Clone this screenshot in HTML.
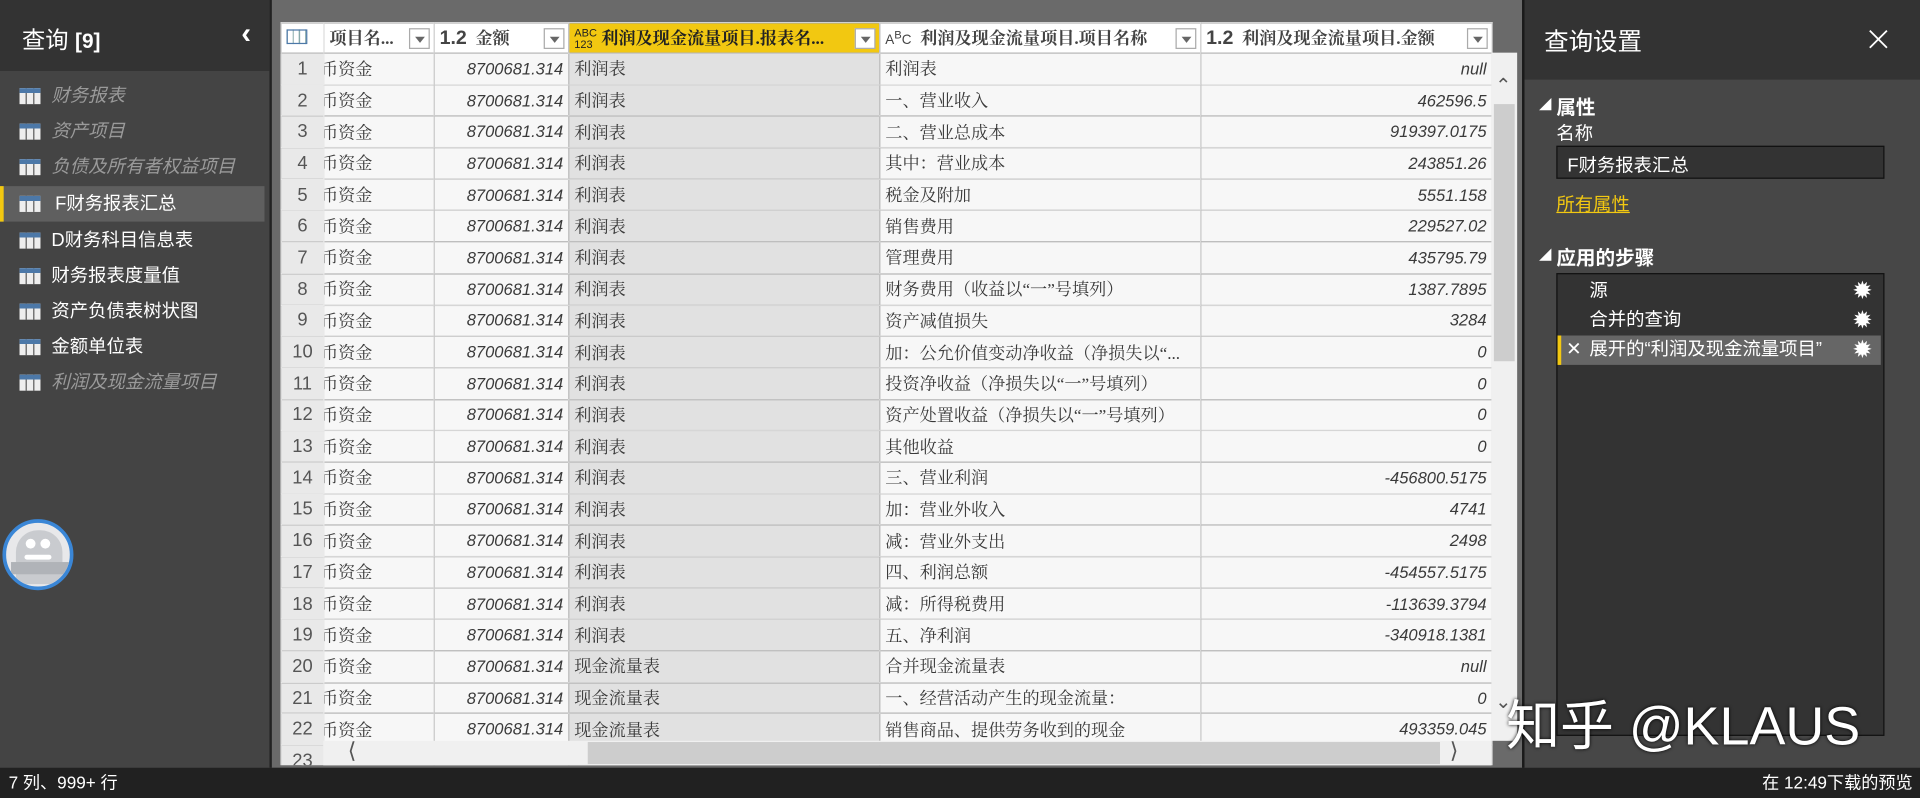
<!DOCTYPE html>
<html><head><meta charset="utf-8">
<style>
*{margin:0;padding:0;box-sizing:border-box}
html,body{width:1920px;height:798px;overflow:hidden;background:#444}
#w{position:absolute;left:0;top:0;width:1568px;height:652px;transform:scale(1.22449);transform-origin:0 0;font-family:"Liberation Sans","Noto Sans CJK SC",sans-serif;background:#444}
.a{position:absolute}
.lp{left:0;top:0;width:220px;height:627px;background:#444}
.lh{left:0;top:0;width:220px;height:58px;background:#333;color:#fff;font-size:19px;padding:18px 0 0 18px}
.it{position:absolute;left:0;width:216px;height:29px;color:#fff;font-size:15px;line-height:29px;padding-left:42px}
.it i{position:absolute;left:16px;top:8px;width:17px;height:13px;background:
linear-gradient(#4c78a8 0 4px,transparent 4px),
repeating-linear-gradient(90deg,#eee 0 5px,#777 5px 6px),#eee}
.it.g{color:#9a9a9a;font-style:italic}
.grid{left:220px;top:0;width:1023px;height:627px;background:#6a6a6a;border-left:2px solid #222;overflow:hidden}
.tw{position:absolute;left:7px;top:18px;width:1010px;height:607px;overflow:hidden}
table{border-collapse:collapse;table-layout:fixed;font-size:14px;color:#3a3a3a;font-family:"Liberation Serif","Noto Serif CJK SC",serif}
td{height:25.7px;border:1px solid #d6d6d6;background:#f7f7f7;white-space:nowrap;overflow:hidden;padding:0 4px}
td.n{background:#e9e9e9;color:#555;text-align:center;font-size:15px;border-color:#e9e9e9;font-family:"Liberation Sans",sans-serif}
td.r{text-align:right;font-style:italic;font-family:"Liberation Sans",sans-serif;font-size:13.5px}
td.c{padding-left:0;text-indent:-3px}
td.s{background:#e1e1e1}
tr.h td{background:#fff;font-weight:bold;color:#444;height:25px;position:relative}
tr.h td.y{background:#f2c811;color:#222}
.dd{position:absolute;right:3px;top:4px;width:17px;height:17px;border:1px solid #aaa;background:#fff}
.dd:after{content:"";position:absolute;left:4px;top:6px;border:4px solid transparent;border-top:5px solid #666}
.rp{left:1243px;top:0;width:325px;height:627px;background:#474747;border-left:2px solid #1a1a1a}
.rh{left:0;top:0;width:325px;height:65px;background:#333}
.sb{left:0;top:627px;width:1568px;height:25px;background:#212121;color:#fff;font-size:14px;line-height:25px}
.step{position:absolute;left:0;width:264px;height:24px;color:#fff;font-size:15px;line-height:24px;padding-left:26px}
.gear{position:absolute;right:8px;top:0;color:#fff;font-size:17px;font-weight:bold}
</style></head><body><div id="w">
<div class="a lp">
<div class="a lh">查询 <b style="font-size:17px">[9]</b><span style="position:absolute;left:197px;top:14px;font-size:24px;font-weight:bold">&#8249;</span></div>
<div class="it g" style="top:64px"><i></i>财务报表</div>
<div class="it g" style="top:93px"><i></i>资产项目</div>
<div class="it g" style="top:122px"><i></i>负债及所有者权益项目</div>
<div class="it" style="top:152px;background:#5f5f5f;border-left:3px solid #f2c811"><i style="left:13px"></i>F财务报表汇总</div>
<div class="it" style="top:182px"><i></i>D财务科目信息表</div>
<div class="it" style="top:211px"><i></i>财务报表度量值</div>
<div class="it" style="top:240px"><i></i>资产负债表树状图</div>
<div class="it" style="top:269px"><i></i>金额单位表</div>
<div class="it g" style="top:298px"><i></i>利润及现金流量项目</div>
<div class="a" style="left:2px;top:424px;width:58px;height:58px;border-radius:50%;border:3px solid #3a86d6;background:#e8e8ea;overflow:hidden">
<div class="a" style="left:8px;top:6px;width:38px;height:44px;border-radius:18px 18px 4px 4px;background:#c9cbcf"></div>
<div class="a" style="left:4px;top:32px;width:48px;height:10px;background:#b0b3b8"></div>
<div class="a" style="left:15px;top:26px;width:22px;height:4px;border-radius:2px;background:#fff"></div>
<div class="a" style="left:16px;top:13px;width:8px;height:8px;border-radius:50%;background:#fff"></div>
<div class="a" style="left:28px;top:13px;width:8px;height:8px;border-radius:50%;background:#fff"></div>
</div>
</div>
<div class="a grid">
<div class="tw">
<table>
<colgroup><col style="width:35px"><col style="width:90px"><col style="width:110px"><col style="width:254px"><col style="width:262px"><col style="width:238px"></colgroup>
<tr class="h"><td style="background:#fff"><span style="display:inline-block;width:17px;height:12px;border:1px solid #4c78a8;background:repeating-linear-gradient(90deg,#fff 0 4px,#8aa 4px 5px);margin-top:3px"></span></td><td>项目名...<span class="dd"></span></td><td><span style="font-size:16px;font-family:'Liberation Sans'">1.2</span>&nbsp; 金额<span class="dd"></span></td><td class="y"><span style="font-size:9px;display:inline-block;line-height:9px;vertical-align:middle;font-weight:normal;font-family:'Liberation Sans'">ABC<br>123</span> 利润及现金流量项目.报表名...<span class="dd"></span></td><td><span style="font-size:11px;font-weight:normal;font-family:'Liberation Sans'">A<sup>B</sup>C</span>&nbsp; 利润及现金流量项目.项目名称<span class="dd"></span></td><td><span style="font-size:16px;font-family:'Liberation Sans'">1.2</span>&nbsp; 利润及现金流量项目.金额<span class="dd"></span></td></tr>
<tr><td class="n">1</td><td class="c">币资金</td><td class="r">8700681.314</td><td class="s">利润表</td><td>利润表</td><td class="r">null</td></tr>
<tr><td class="n">2</td><td class="c">币资金</td><td class="r">8700681.314</td><td class="s">利润表</td><td>一、营业收入</td><td class="r">462596.5</td></tr>
<tr><td class="n">3</td><td class="c">币资金</td><td class="r">8700681.314</td><td class="s">利润表</td><td>二、营业总成本</td><td class="r">919397.0175</td></tr>
<tr><td class="n">4</td><td class="c">币资金</td><td class="r">8700681.314</td><td class="s">利润表</td><td>其中：营业成本</td><td class="r">243851.26</td></tr>
<tr><td class="n">5</td><td class="c">币资金</td><td class="r">8700681.314</td><td class="s">利润表</td><td>税金及附加</td><td class="r">5551.158</td></tr>
<tr><td class="n">6</td><td class="c">币资金</td><td class="r">8700681.314</td><td class="s">利润表</td><td>销售费用</td><td class="r">229527.02</td></tr>
<tr><td class="n">7</td><td class="c">币资金</td><td class="r">8700681.314</td><td class="s">利润表</td><td>管理费用</td><td class="r">435795.79</td></tr>
<tr><td class="n">8</td><td class="c">币资金</td><td class="r">8700681.314</td><td class="s">利润表</td><td>财务费用（收益以“一”号填列）</td><td class="r">1387.7895</td></tr>
<tr><td class="n">9</td><td class="c">币资金</td><td class="r">8700681.314</td><td class="s">利润表</td><td>资产减值损失</td><td class="r">3284</td></tr>
<tr><td class="n">10</td><td class="c">币资金</td><td class="r">8700681.314</td><td class="s">利润表</td><td>加：公允价值变动净收益（净损失以“...</td><td class="r">0</td></tr>
<tr><td class="n">11</td><td class="c">币资金</td><td class="r">8700681.314</td><td class="s">利润表</td><td>投资净收益（净损失以“一”号填列）</td><td class="r">0</td></tr>
<tr><td class="n">12</td><td class="c">币资金</td><td class="r">8700681.314</td><td class="s">利润表</td><td>资产处置收益（净损失以“一”号填列）</td><td class="r">0</td></tr>
<tr><td class="n">13</td><td class="c">币资金</td><td class="r">8700681.314</td><td class="s">利润表</td><td>其他收益</td><td class="r">0</td></tr>
<tr><td class="n">14</td><td class="c">币资金</td><td class="r">8700681.314</td><td class="s">利润表</td><td>三、营业利润</td><td class="r">-456800.5175</td></tr>
<tr><td class="n">15</td><td class="c">币资金</td><td class="r">8700681.314</td><td class="s">利润表</td><td>加：营业外收入</td><td class="r">4741</td></tr>
<tr><td class="n">16</td><td class="c">币资金</td><td class="r">8700681.314</td><td class="s">利润表</td><td>减：营业外支出</td><td class="r">2498</td></tr>
<tr><td class="n">17</td><td class="c">币资金</td><td class="r">8700681.314</td><td class="s">利润表</td><td>四、利润总额</td><td class="r">-454557.5175</td></tr>
<tr><td class="n">18</td><td class="c">币资金</td><td class="r">8700681.314</td><td class="s">利润表</td><td>减：所得税费用</td><td class="r">-113639.3794</td></tr>
<tr><td class="n">19</td><td class="c">币资金</td><td class="r">8700681.314</td><td class="s">利润表</td><td>五、净利润</td><td class="r">-340918.1381</td></tr>
<tr><td class="n">20</td><td class="c">币资金</td><td class="r">8700681.314</td><td class="s">现金流量表</td><td>合并现金流量表</td><td class="r">null</td></tr>
<tr><td class="n">21</td><td class="c">币资金</td><td class="r">8700681.314</td><td class="s">现金流量表</td><td>一、经营活动产生的现金流量：</td><td class="r">0</td></tr>
<tr><td class="n">22</td><td class="c">币资金</td><td class="r">8700681.314</td><td class="s">现金流量表</td><td>销售商品、提供劳务收到的现金</td><td class="r">493359.045</td></tr>
<tr><td class="n">23</td><td></td><td></td><td></td><td></td><td></td></tr>
</table>
</div>
<div class="a" style="left:42px;top:605px;width:954px;height:20px;background:#f0f0f0"></div>
<div class="a" style="left:258px;top:606px;width:696px;height:18px;background:#cdcdcd"></div>
<div class="a" style="left:62px;top:603px;color:#555;font-size:18px">&#10216;</div>
<div class="a" style="left:962px;top:603px;color:#555;font-size:18px">&#10217;</div>
<div class="a" style="left:996px;top:43px;width:21px;height:562px;background:#f0f0f0"></div>
<div class="a" style="left:998px;top:85px;width:17px;height:210px;background:#cdcdcd"></div>
<div class="a" style="left:999px;top:60px;color:#555;font-size:16px">&#8963;</div>
<div class="a" style="left:999px;top:563px;color:#555;font-size:16px">&#8964;</div>
</div>
<div class="a rp">
<div class="a rh"><span class="a" style="left:16px;top:18px;color:#fff;font-size:20px">查询设置</span><svg class="a" style="left:280px;top:23px" width="18" height="18"><path d="M2 2L16 16M16 2L2 16" stroke="#fff" stroke-width="1.5"/></svg></div>
<div class="a" style="left:12px;top:77px;color:#fff;font-size:10px">&#9698;</div>
<div class="a" style="left:26px;top:74px;color:#fff;font-size:16px;font-weight:bold">属性</div>
<div class="a" style="left:26px;top:98px;color:#fff;font-size:15px">名称</div>
<div class="a" style="left:26px;top:119px;width:268px;height:27px;background:#333;border:1px solid #111;color:#fff;font-size:15px;padding:4px 8px">F财务报表汇总</div>
<div class="a" style="left:26px;top:156px;color:#f2c811;font-size:15px;text-decoration:underline">所有属性</div>
<div class="a" style="left:12px;top:200px;color:#fff;font-size:10px">&#9698;</div>
<div class="a" style="left:26px;top:197px;color:#fff;font-size:16px;font-weight:bold">应用的步骤</div>
<div class="a" style="left:26px;top:223px;width:268px;height:378px;background:#333;border:1px solid #111">
<div class="step" style="top:2px">源<span class="gear">&#10041;</span></div>
<div class="step" style="top:26px">合并的查询<span class="gear">&#10041;</span></div>
<div class="step" style="top:50px;background:#666;border-left:3px solid #f2c811;padding-left:23px"><span style="position:absolute;left:4px">&#10005;</span>展开的“利润及现金流量项目”<span class="gear">&#10041;</span></div>
</div>
</div>
<div class="a sb"><span style="padding-left:7px">7 列、999+ 行</span><span style="position:absolute;right:6px">在 12:49下载的预览</span></div>
<div class="a" style="left:1230px;top:557px;color:#fff;font-size:44px;text-shadow:0 0 3px #000">知乎 @KLAUS</div>
</div></body></html>
